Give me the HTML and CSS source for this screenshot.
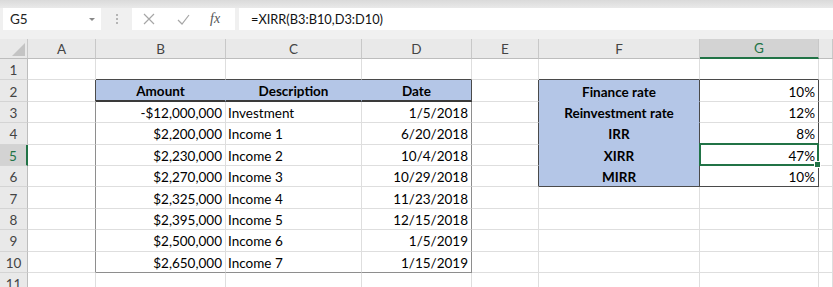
FILE: index.html
```html
<!DOCTYPE html>
<html lang="en">
<head>
  <meta charset="UTF-8" />
  <title>XIRR sheet</title>
  <link rel="stylesheet" href="styles.css">
</head>
<body>
  <div class="ribbon-edge"></div>

  <div class="formula-bar">
    <div class="name-box">
      <span>G5</span>
      <span class="caret"></span>
    </div>
    <div class="grip"><i></i><i></i><i></i></div>
    <div class="fx-buttons">
      <svg width="12" height="12" viewBox="0 0 12 12"><path d="M1 1 L11 11 M11 1 L1 11" stroke="#a6a6a6" stroke-width="1.2" fill="none"/></svg>
      <svg width="13" height="11" viewBox="0 0 13 11"><path d="M1 6 L5 10 L12 1" stroke="#a6a6a6" stroke-width="1.2" fill="none"/></svg>
      <span class="fx">fx</span>
    </div>
    <div class="formula">=XIRR(B3:B10,D3:D10)</div>
  </div>

  <div class="gap-band"></div>

  <div class="sheet">
    <!-- column headers -->
    <div class="c corner"><span class="tri"></span></div>
    <div class="c h">A</div><div class="c h">B</div><div class="c h">C</div><div class="c h">D</div>
    <div class="c h">E</div><div class="c h">F</div><div class="c h sel-col">G</div><div class="c h"></div>

    <!-- row 1 -->
    <div class="c rh">1</div><div class="c"></div>
    <div class="c bb-dk"></div><div class="c bb-dk"></div><div class="c bb-dk"></div>
    <div class="c"></div><div class="c bb-dk"></div><div class="c bb-dk"></div><div class="c"></div>

    <!-- row 2 -->
    <div class="c rh">2</div><div class="c br-dk"></div>
    <div class="c th bb2 br-fill">Amount</div><div class="c th bb2 br-fill">Description</div><div class="c th bb2 br-dk">Date</div>
    <div class="c br-dk"></div><div class="c th br-dk bb-fill">Finance rate</div><div class="c num br-dk">10%</div><div class="c"></div>

    <!-- row 3 -->
    <div class="c rh">3</div><div class="c br-gr"></div>
    <div class="c num">-$12,000,000</div><div class="c txt">Investment</div><div class="c num br-gr">1/5/2018</div>
    <div class="c br-dk"></div><div class="c th br-dk bb-fill">Reinvestment rate</div><div class="c num br-dk">12%</div><div class="c"></div>

    <!-- row 4 -->
    <div class="c rh">4</div><div class="c br-gr"></div>
    <div class="c num">$2,200,000</div><div class="c txt">Income 1</div><div class="c num br-gr">6/20/2018</div>
    <div class="c br-dk"></div><div class="c th br-dk bb-fill">IRR</div><div class="c num br-dk">8%</div><div class="c"></div>

    <!-- row 5 -->
    <div class="c rh sel-row">5</div><div class="c br-gr"></div>
    <div class="c num">$2,230,000</div><div class="c txt">Income 2</div><div class="c num br-gr">10/4/2018</div>
    <div class="c br-dk"></div><div class="c th br-dk bb-fill">XIRR</div>
    <div class="c num br-dk active">47%<span class="cursor"><span class="handle"></span></span></div><div class="c"></div>

    <!-- row 6 -->
    <div class="c rh">6</div><div class="c br-gr"></div>
    <div class="c num">$2,270,000</div><div class="c txt">Income 3</div><div class="c num br-gr">10/29/2018</div>
    <div class="c br-dk"></div><div class="c th br-dk bb-dk">MIRR</div><div class="c num br-dk bb-dk">10%</div><div class="c"></div>

    <!-- row 7 -->
    <div class="c rh">7</div><div class="c br-gr"></div>
    <div class="c num">$2,325,000</div><div class="c txt">Income 4</div><div class="c num br-gr">11/23/2018</div>
    <div class="c"></div><div class="c"></div><div class="c"></div><div class="c"></div>

    <!-- row 8 -->
    <div class="c rh">8</div><div class="c br-gr"></div>
    <div class="c num">$2,395,000</div><div class="c txt">Income 5</div><div class="c num br-gr">12/15/2018</div>
    <div class="c"></div><div class="c"></div><div class="c"></div><div class="c"></div>

    <!-- row 9 -->
    <div class="c rh">9</div><div class="c br-gr"></div>
    <div class="c num">$2,500,000</div><div class="c txt">Income 6</div><div class="c num br-gr">1/5/2019</div>
    <div class="c"></div><div class="c"></div><div class="c"></div><div class="c"></div>

    <!-- row 10 -->
    <div class="c rh">10</div><div class="c br-gr"></div>
    <div class="c num bb-gr">$2,650,000</div><div class="c txt bb-gr">Income 7</div><div class="c num br-gr bb-gr">1/15/2019</div>
    <div class="c"></div><div class="c"></div><div class="c"></div><div class="c"></div>

    <!-- row 11 -->
    <div class="c rh">11</div><div class="c"></div>
    <div class="c"></div><div class="c"></div><div class="c"></div>
    <div class="c"></div><div class="c"></div><div class="c"></div><div class="c"></div>
  </div>
</body>
</html>
```

FILE: styles.css
```css
body {
  margin: 0;
  width: 833px;
  height: 287px;
  overflow: hidden;
  background-color: #f0f0f0;
  font-family: Lato, "Liberation Sans", sans-serif;
  color: #000;
}
.ribbon-edge {
  height: 8px;
  background: linear-gradient(#dadada, #e9e9e9);
}
.formula-bar {
  display: flex;
  height: 22px;
  padding-left: 3px;
}
.name-box {
  width: 98px;
  background-color: #fff;
  display: flex;
  align-items: center;
  justify-content: space-between;
  padding: 0 6px 0 7px;
  box-sizing: border-box;
  font-size: 13.5px;
  color: #222;
}
.caret {
  width: 0;
  height: 0;
  border-left: 3px solid transparent;
  border-right: 3px solid transparent;
  border-top: 3px solid #888;
}
.grip {
  width: 31px;
  display: flex;
  flex-direction: column;
  align-items: center;
  justify-content: center;
  gap: 2px;
}
.grip i {
  width: 2px;
  height: 2px;
  background-color: #b5b5b5;
}
.fx-buttons {
  width: 103px;
  background-color: #fff;
  display: flex;
  align-items: center;
  padding-left: 11px;
  box-sizing: border-box;
}
.fx-buttons svg {
  margin-right: 22px;
}
.fx-buttons svg + svg {
  margin-right: 20px;
}
.fx {
  font-family: "Liberation Serif", serif;
  font-style: italic;
  font-size: 14px;
  color: #555;
}
.formula {
  flex: 1;
  margin-left: 4px;
  background-color: #fff;
  padding-left: 12px;
  display: flex;
  align-items: center;
  font-size: 12.8px;
  color: #111;
}
.gap-band {
  height: 9px;
}
.sheet {
  display: grid;
  grid-template-columns: 28px 68px 130px 136px 110px 67px 161px 119px 1fr;
  grid-template-rows: 20px repeat(11, 21.4px);
  background-color: #fff;
  font-size: 13.5px;
}
.c {
  box-sizing: border-box;
  border-right: 1px solid #dedede;
  border-bottom: 1px solid #dedede;
  display: flex;
  align-items: center;
  white-space: nowrap;
  padding-top: 2px;
}
.h {
  background-color: #e9e9e9;
  border-right-color: #c8c8c8;
  border-bottom-color: #bdbdbd;
  justify-content: center;
  color: #444;
  padding-top: 0;
}
.corner {
  background-color: #e9e9e9;
  border-right-color: #c8c8c8;
  border-bottom-color: #bdbdbd;
  position: relative;
}
.tri {
  position: absolute;
  right: 2px;
  bottom: 2px;
  width: 0;
  height: 0;
  border-left: 13px solid transparent;
  border-bottom: 13px solid #c4c4c4;
}
.rh {
  background-color: #e9e9e9;
  border-right-color: #bdbdbd;
  border-bottom-color: #d4d4d4;
  justify-content: center;
  color: #444;
}
.sel-col {
  background-color: #d3d3d3;
  border-bottom: 2px solid #217346;
  color: #217346;
}
.sel-row {
  background-color: #d3d3d3;
  border-right: 2px solid #217346;
  color: #217346;
}
.th {
  background-color: #b4c6e7;
  font-weight: bold;
  justify-content: center;
}
.num {
  justify-content: flex-end;
  padding-right: 3px;
}
.txt {
  padding-left: 2px;
}
.bb-dk { border-bottom-color: #4a4a4a; }
.br-dk { border-right-color: #4a4a4a; }
.bb-gr { border-bottom-color: #8e8e8e; }
.br-gr { border-right-color: #8e8e8e; }
.br-fill { border-right-color: #b4c6e7; }
.bb-fill { border-bottom-color: #b4c6e7; }
.bb2 { border-bottom: 2px solid #3a3a3a; }
.active {
  position: relative;
}
.cursor {
  position: absolute;
  top: -2px;
  left: -1px;
  right: -1px;
  bottom: -1px;
  border: 2px solid #217346;
}
.handle {
  position: absolute;
  right: -4px;
  bottom: -4px;
  width: 5px;
  height: 5px;
  background-color: #217346;
  border: 1px solid #fff;
}
```
